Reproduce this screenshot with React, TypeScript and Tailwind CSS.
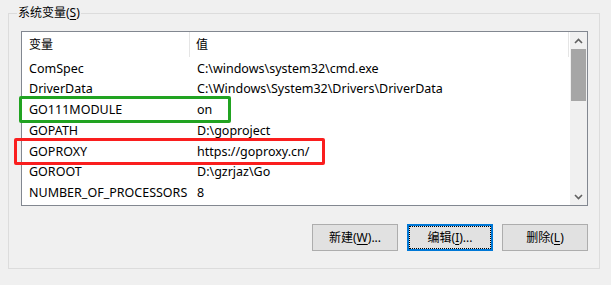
import React from 'react'

const rows = [
  { name: 'ComSpec', value: 'C:\\windows\\system32\\cmd.exe' },
  { name: 'DriverData', value: 'C:\\Windows\\System32\\Drivers\\DriverData' },
  { name: 'GO111MODULE', value: 'on' },
  { name: 'GOPATH', value: 'D:\\goproject' },
  { name: 'GOPROXY', value: 'https://goproxy.cn/' },
  { name: 'GOROOT', value: 'D:\\gzrjaz\\Go' },
  { name: 'NUMBER_OF_PROCESSORS', value: '8' },
]

const font = { fontFamily: '"Noto Sans", "Noto Sans CJK SC", sans-serif' }

function Btn({ pre, key1, post, focused }: { pre: string; key1: string; post: string; focused?: boolean }) {
  return (
    <div
      className={
        'relative w-[86px] h-[27px] flex items-center justify-center bg-[#e1e1e1] text-[12px] text-black ' +
        (focused ? 'border-2 border-[#0078d7]' : 'border border-[#adadad]')
      }
    >
      {focused && <div className="absolute inset-0 border border-dotted border-black" />}
      <span>
        {pre}(<span className="underline underline-offset-2">{key1}</span>){post}
      </span>
    </div>
  )
}

export default function App() {
  return (
    <div className="relative w-[611px] h-[285px] bg-[#f0f0f0] pl-[8px] pt-[13px] overflow-hidden" style={font}>
      {/* 分组框 */}
      <div className="relative w-[592px] h-[256px] border border-[#dcdcdc] pl-[12px] pt-[17px]">
        <div className="absolute left-[8px] top-[-10px] px-[1px] bg-[#f0f0f0] text-[12px] leading-[18px] text-black">
          系统变量(<span className="underline underline-offset-2">S</span>)
        </div>

        {/* 列表 */}
        <div className="w-[567px] h-[175px] border border-[#828790] bg-white flex">
          <div className="flex-1 flex flex-col text-[12.5px] text-black">
            <div className="h-[25px] flex items-center border-r border-[#e5e5e5] w-[547px] text-[12px]">
              <div className="w-[168px] pl-[7px] h-full flex items-center border-r border-[#e5e5e5]">变量</div>
              <div className="pl-[6px]">值</div>
            </div>
            {rows.map((r) => (
              <div key={r.name} className="h-[20.75px] pt-[3px] flex items-center">
                <div className="w-[169px] pl-[7px] whitespace-nowrap">{r.name}</div>
                <div className="pl-[6px] whitespace-nowrap">{r.value}</div>
              </div>
            ))}
          </div>
          {/* 滚动条 */}
          <div className="w-[17px] bg-[#f0f0f0] flex flex-col">
            <div className="h-[17px] flex items-center justify-center">
              <svg width="9" height="6" viewBox="0 0 9 6">
                <path d="M1 5 L4.5 1.5 L8 5" stroke="#606060" strokeWidth="1.6" fill="none" />
              </svg>
            </div>
            <div className="mx-[1px] h-[52px] bg-[#a6a6a6]" />
            <div className="flex-1" />
            <div className="h-[17px] flex items-center justify-center">
              <svg width="9" height="6" viewBox="0 0 9 6">
                <path d="M1 1 L4.5 4.5 L8 1" stroke="#606060" strokeWidth="1.6" fill="none" />
              </svg>
            </div>
          </div>
        </div>

        {/* 按钮 */}
        <div className="w-[567px] mt-[18px] flex justify-end gap-[9px]">
          <Btn pre="新建" key1="W" post="..." />
          <Btn pre="编辑" key1="I" post="..." focused />
          <Btn pre="删除" key1="L" post="" />
        </div>
      </div>

      {/* 标注框 */}
      <div className="absolute left-[19px] top-[96px] w-[212px] h-[27px] border-[3px] border-[#21a321] rounded-[2px]" />
      <div className="absolute left-[14px] top-[138px] w-[311px] h-[27px] border-[3px] border-[#fa1e1e] rounded-[2px]" />
    </div>
  )
}
